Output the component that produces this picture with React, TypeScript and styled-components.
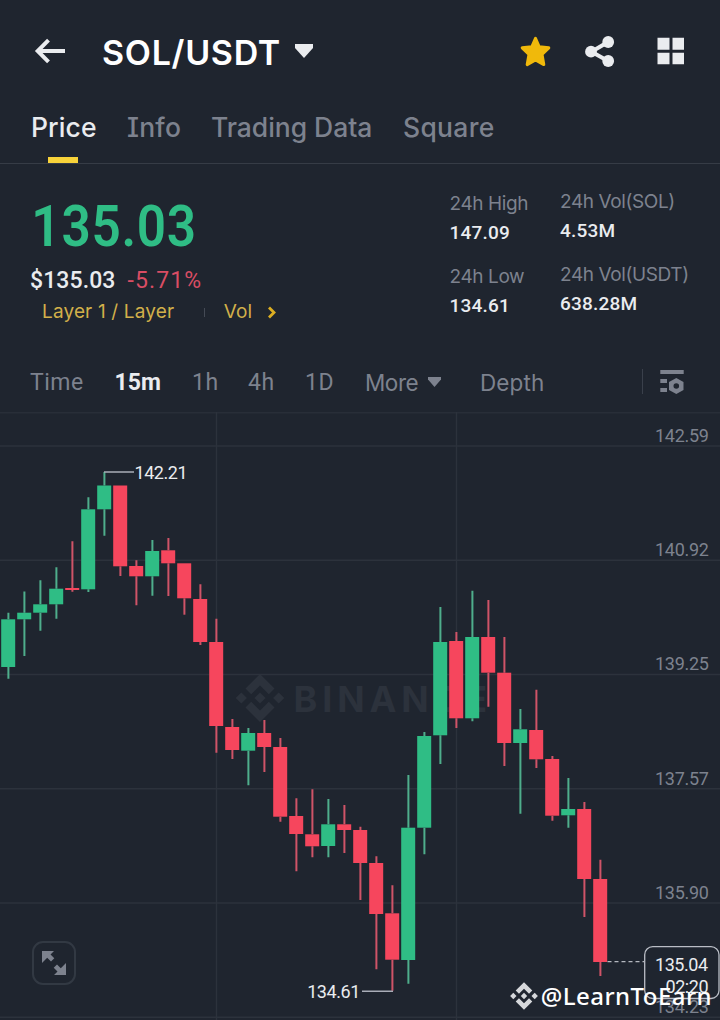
import React from 'react';
import styled, { createGlobalStyle } from 'styled-components';

const color = {
  bg: '#1f252f',
  line: '#2c323c',
  text: '#eaecef',
  muted: '#7d828e',
  gold: '#d2b04a',
  brand: '#f0b90b',
  up: '#2fbd85',
  upWick: '#4fae8c',
  down: '#f6465d',
  downWick: '#cf5468',
};

const numeric = `Roboto, 'Liberation Sans', sans-serif`;
const textual = `Inter, 'Liberation Sans', sans-serif`;

const GlobalStyle = createGlobalStyle`
  * { box-sizing: border-box; }
  body {
    margin: 0;
    background: ${color.bg};
    color: ${color.text};
    font-family: ${textual};
  }
  svg { display: block; }
`;

const Screen = styled.main`
  position: relative;
  display: flex;
  flex-direction: column;
  width: 720px;
  height: 1020px;
  overflow: hidden;
  background: ${color.bg};
  white-space: nowrap;
`;

const Header = styled.header`
  display: flex;
  align-items: center;
  height: 102px;
  padding: 0 36px 0 34px;
`;

const Pair = styled.h1`
  margin: 3px 0 0 37px;
  font-size: 34px;
  font-weight: 600;
  line-height: 44px;
  letter-spacing: 0.7px;
  color: #fff;
`;

const PairCaret = styled.svg`
  margin-left: 14px;
`;

const Actions = styled.div`
  display: flex;
  align-items: center;
  gap: 34px;
  margin-left: auto;
`;

const Tabs = styled.nav`
  display: grid;
  grid-template-columns: 96px 84px 192px auto;
  height: 62px;
  padding: 7px 0 0 31px;
  border-bottom: 1px solid #363c46;
`;

const Tab = styled.a<{ $active?: boolean; $spacing?: number }>`
  position: relative;
  font-size: 26.5px;
  font-weight: 500;
  font-feature-settings: 'cv08';
  line-height: 36px;
  letter-spacing: ${(p) => p.$spacing ?? 0}px;
  color: ${(p) => (p.$active ? color.text : color.muted)};

  &::after {
    content: '';
    display: ${(p) => (p.$active ? 'block' : 'none')};
    position: absolute;
    left: 17px;
    bottom: 0;
    width: 30px;
    height: 6px;
    background: #f8d33a;
  }
`;

const Summary = styled.section`
  display: flex;
  height: 190px;
  padding: 0 0 0 30px;
`;

const Quote = styled.div`
  width: 419.5px;
  padding-top: 33px;
`;

const LastPrice = styled.div`
  width: max-content;
  padding-left: 1.5px;
  font: 600 57px/60px ${numeric};
  letter-spacing: 0.8px;
  color: ${color.up};
  transform: scaleX(0.9);
  transform-origin: 0 50%;
`;

const Change = styled.div`
  display: flex;
  gap: 12px;
  margin-top: 10px;
  font: 500 23px/28px ${numeric};
`;

const Fiat = styled.span`
  letter-spacing: 0.1px;
`;

const Percent = styled.span`
  font-weight: 400;
  letter-spacing: 1.1px;
  color: #d94d64;
`;

const Tags = styled.div`
  display: flex;
  align-items: center;
  margin-top: 5px;
  padding-left: 12px;
  font-size: 19px;
  line-height: 24px;
  letter-spacing: 0.15px;
  color: ${color.gold};
`;

const TagDivider = styled.i`
  width: 1px;
  height: 9px;
  margin: 0 18.5px 0 30px;
  background: #444a55;
`;

const TagChevron = styled.svg`
  margin-left: 15px;
`;

const StatColumn = styled.dl<{ $width: number; $top: number }>`
  width: ${(p) => p.$width}px;
  margin: 0;
  padding-top: ${(p) => p.$top}px;
`;

const StatLabel = styled.dt`
  font-size: 19px;
  line-height: 28px;
  letter-spacing: -0.4px;
  color: ${color.muted};
`;

const StatValue = styled.dd`
  margin: 0 0 16px;
  font: 480 19px/29px ${numeric};
  letter-spacing: 0.2px;
`;

const Intervals = styled.nav`
  display: grid;
  grid-template-columns: 84.5px 77.5px 56px 57px 60px 115px 1fr auto auto;
  align-items: center;
  height: 58px;
  padding: 0 36px 0 30px;
`;

const Interval = styled.a<{ $active?: boolean }>`
  font: ${(p) => (p.$active ? 700 : 400)} 23px/30px ${numeric};
  letter-spacing: ${(p) => (p.$active ? 0 : 0.5)}px;
  color: ${(p) => (p.$active ? color.text : color.muted)};
`;

const MenuItem = styled.a<{ $spacing?: number }>`
  display: flex;
  align-items: center;
  gap: 9px;
  font-size: 22.5px;
  line-height: 30px;
  letter-spacing: ${(p) => p.$spacing ?? 0}px;
  color: ${color.muted};
`;

const MenuCaret = styled.svg`
  margin: -3px 0 0 0.5px;
`;

const ToolDivider = styled.i`
  width: 1px;
  height: 25px;
  margin: -3px 17px 0 0;
  background: #3a404b;
`;

const ToolIcon = styled.svg`
  margin-top: -2px;
`;

const ChartArea = styled.section`
  position: relative;
  flex: 1;
`;

const AxisText = styled.text`
  font: 400 18px ${numeric};
  letter-spacing: -0.3px;
  fill: ${color.muted};
`;

const MarkText = styled.text`
  font: 400 18px ${numeric};
  letter-spacing: -0.45px;
  fill: ${color.text};
`;

const WatermarkText = styled.text`
  font: 700 36px ${textual};
  letter-spacing: 4.9px;
  fill: #2c323c;
`;

const ExpandButton = styled.button`
  position: absolute;
  left: 32px;
  bottom: 35px;
  display: grid;
  place-items: center;
  width: 44px;
  height: 44px;
  padding: 0;
  border: 2px solid #323943;
  border-radius: 11px;
  background: transparent;
`;

const Attribution = styled.div`
  position: absolute;
  right: 8px;
  bottom: 8px;
  display: flex;
  align-items: center;
  gap: 3px;
  font: 500 24px/32px 'Noto Sans', sans-serif;
  letter-spacing: 0.45px;
  color: #fff;
`;

type Candle = [up: 0 | 1, high: number, top: number, bottom: number, low: number];

const candles: Candle[] = [
  [1, 612.7, 619.3, 667, 678.7],
  [1, 591.5, 612.7, 619.3, 656],
  [1, 580.3, 604.3, 612.7, 630.7],
  [1, 567.3, 588.7, 604.3, 618.7],
  [0, 541.3, 588, 590, 591.7],
  [1, 497.3, 509.3, 589.3, 592],
  [1, 472, 485.5, 509.3, 535.7],
  [0, 485.5, 485.5, 566.3, 576],
  [0, 560.3, 566, 576.3, 605.3],
  [1, 540, 551, 576.3, 595.7],
  [0, 538, 550.3, 563.3, 596],
  [0, 563.3, 563.3, 598.3, 614.7],
  [0, 584.3, 599, 642, 645],
  [0, 618.7, 642, 726, 752.7],
  [0, 719, 727, 750, 759],
  [1, 728, 733, 750.7, 785.3],
  [0, 720, 733, 747, 772],
  [0, 738, 747, 816.7, 821.7],
  [0, 798.3, 816, 834, 871.3],
  [0, 789.3, 834.3, 846.3, 857.3],
  [1, 799, 824.3, 846, 857.3],
  [0, 805, 824.3, 830, 853],
  [0, 826.7, 830, 863, 900],
  [0, 856.3, 863, 914, 969.3],
  [0, 885.3, 913.3, 959.7, 990.7],
  [1, 775, 827.7, 960, 983.7],
  [1, 732, 736, 827.7, 854.3],
  [1, 607, 642, 735.3, 764],
  [0, 632, 641, 718.3, 728],
  [1, 590.7, 637, 718.3, 721.3],
  [0, 600, 637, 672.7, 706.7],
  [0, 637, 672.7, 743, 766],
  [1, 709, 729.3, 743, 813.7],
  [0, 689.7, 730, 759.3, 768],
  [0, 756, 759, 815.7, 820.7],
  [1, 778, 809, 815.3, 827.7],
  [0, 802, 809, 879, 917],
  [0, 859.7, 879, 962, 976],
];

const priceLevels = ['142.59', '140.92', '139.25', '137.57', '135.90', '134.23'];

const tabs = [
  { label: 'Price', active: true, spacing: 0.1 },
  { label: 'Info', spacing: 0.2 },
  { label: 'Trading Data', spacing: -0.05 },
  { label: 'Square', spacing: 0.3 },
];

function BinanceMark() {
  return (
    <g>
      <path d="M-14.5-9.5 0-24 14.5-9.5 8.8-3.8 0-12.6-8.8-3.8Z" />
      <path d="M-14.5 9.5 0 24 14.5 9.5 8.8 3.8 0 12.6-8.8 3.8Z" />
      <path d="M0-5.6 5.6 0 0 5.6-5.6 0Z" />
      <path d="M-18.7-5.6-13.1 0-18.7 5.6-24.3 0Z" />
      <path d="M18.7-5.6 24.3 0 18.7 5.6 13.1 0Z" />
    </g>
  );
}

function Chart() {
  return (
    <svg width="720" height="608" viewBox="0 412 720 608">
      <g stroke={color.line} strokeWidth="1.4">
        <path d="M0 412.4H720" strokeWidth="2" stroke="#282e38" />
        {priceLevels.map((p, i) => (
          <path key={p} d={`M0 ${446 + i * 114.25}H720`} />
        ))}
        <path d="M216.5 412V1020M456.5 412V1020" />
      </g>

      <g transform="translate(260 698)" fill="#2c323c">
        <BinanceMark />
      </g>
      <WatermarkText x="293.5" y="712">BINANCE</WatermarkText>

      {candles.map(([up, high, top, bottom, low], i) => (
        <g key={i}>
          <rect x={1.2 + i * 16} y={top} width="14" height={bottom - top} fill={up ? color.up : color.down} />
          <path
            d={`M${8.4 + i * 16} ${high}V${top}M${8.4 + i * 16} ${bottom}V${low}`}
            stroke={up ? color.upWick : color.downWick}
            strokeWidth="2"
          />
        </g>
      ))}

      <path d="M104 472H134M362 991.3H393" stroke="#a9adb8" strokeWidth="1.5" />
      <MarkText x="134.5" y="479">142.21</MarkText>
      <MarkText x="307.2" y="998">134.61</MarkText>

      {priceLevels.map((p, i) => (
        <AxisText key={p} x="655" y={442 + i * 114.2}>{p}</AxisText>
      ))}

      <path d="M607.5 961.7H644" stroke="#b4b8bf" strokeWidth="1.3" strokeDasharray="4 3" />
      <rect x="644.7" y="946.7" width="74.3" height="51.8" rx="8" fill={color.bg} stroke="#b9bdc5" strokeWidth="1.3" />
      <MarkText x="655" y="971.3">135.04</MarkText>
      <MarkText x="665.5" y="992.7">02:20</MarkText>
    </svg>
  );
}

export default function App() {
  return (
    <>
      <GlobalStyle />
      <Screen>
        <Header>
          <svg width="31" height="26" viewBox="0 0 31 26" fill="none" stroke={color.text} strokeWidth="4">
            <path d="M4 13H31M14.5 2.2 3.7 13l10.8 10.8" />
          </svg>
          <Pair>SOL/USDT</Pair>
          <PairCaret width="18" height="14" viewBox="0 0 18 14" fill={color.text}>
            <path d="M0 0H18V4L9 14 0 4Z" />
          </PairCaret>
          <Actions>
            <svg width="31" height="31" viewBox="0 0 31 31" fill={color.brand} stroke={color.brand} strokeWidth="3" strokeLinejoin="round">
              <path d="M15.5 2.4 19.2 10.8 28.8 11.8 22 18.3 23.8 28.6 15.5 24 7.2 28.6 9 18.3 2.2 11.8 11.8 10.8Z" />
            </svg>
            <svg width="30" height="31" viewBox="0 0 30 31" fill={color.text}>
              <path d="M23 6 6.5 15.7 23 25" fill="none" stroke={color.text} strokeWidth="4" />
              <circle cx="23.2" cy="6" r="5.9" />
              <circle cx="6" cy="15.7" r="5.9" />
              <circle cx="23.2" cy="25" r="5.9" />
            </svg>
            <svg width="35.5" height="28" viewBox="-8.5 0 35.5 28" fill={color.text}>
              <path d="M0 .7H12V12.7H0ZM15 .7H27V12.7H15ZM0 15.7H12V27.3H0ZM15 15.7H27V27.3H15Z" />
            </svg>
          </Actions>
        </Header>

        <Tabs>
          {tabs.map((t) => (
            <Tab key={t.label} $active={t.active} $spacing={t.spacing}>{t.label}</Tab>
          ))}
        </Tabs>

        <Summary>
          <Quote>
            <LastPrice>135.03</LastPrice>
            <Change>
              <Fiat>$135.03</Fiat>
              <Percent>-5.71%</Percent>
            </Change>
            <Tags>
              <span>Layer 1 / Layer</span>
              <TagDivider />
              <span>Vol</span>
              <TagChevron width="10" height="13" viewBox="0 0 10 13" fill="none" stroke="#dcae22" strokeWidth="2.8">
                <path d="M2 1.5 7 6.5 2 11.5" />
              </TagChevron>
            </Tags>
          </Quote>
          <StatColumn $width={110.5} $top={26}>
            <StatLabel>24h High</StatLabel>
            <StatValue>147.09</StatValue>
            <StatLabel>24h Low</StatLabel>
            <StatValue>134.61</StatValue>
          </StatColumn>
          <StatColumn $width={160} $top={23.5}>
            <StatLabel>24h Vol(SOL)</StatLabel>
            <StatValue>4.53M</StatValue>
            <StatLabel>24h Vol(USDT)</StatLabel>
            <StatValue>638.28M</StatValue>
          </StatColumn>
        </Summary>

        <Intervals>
          <Interval>Time</Interval>
          <Interval $active>15m</Interval>
          <Interval>1h</Interval>
          <Interval>4h</Interval>
          <Interval>1D</Interval>
          <MenuItem $spacing={-0.45}>
            More
            <MenuCaret width="13" height="10" viewBox="0 0 13 10" fill={color.muted}>
              <path d="M0 0H13V2.5L6.5 10 0 2.5Z" />
            </MenuCaret>
          </MenuItem>
          <MenuItem $spacing={0.1}>Depth</MenuItem>
          <ToolDivider />
          <ToolIcon width="24" height="24" viewBox="0 0 24 24" fill={color.muted}>
            <path d="M.3 0H23.7V4H.3ZM.3 9H7V13H.3ZM.3 18H7V22H.3Z" />
            <path fillRule="evenodd" d="M16.3 8 23.5 12V20L16.3 24 9 20V12ZM16.3 13.2a2.8 2.8 0 1 0 0 5.6 2.8 2.8 0 0 0 0-5.6Z" />
          </ToolIcon>
        </Intervals>

        <ChartArea>
          <Chart />
          <ExpandButton aria-label="Expand">
            <svg width="24" height="24" viewBox="0 0 24 24" fill={color.muted}>
              <path d="M0 0H12L8.5 3.5 12.3 7.3 9 10.6 5.2 6.8 0 12Z" />
              <path d="M24 24H12L15.5 20.5 11.7 16.7 15 13.4 18.8 17.2 24 12Z" />
            </svg>
          </ExpandButton>
        </ChartArea>

        <Attribution>
          <svg width="28" height="28" viewBox="-24.5 -24.5 49 49" fill="#d6d8db">
            <BinanceMark />
          </svg>
          @LearnToEarn
        </Attribution>
      </Screen>
    </>
  );
}
